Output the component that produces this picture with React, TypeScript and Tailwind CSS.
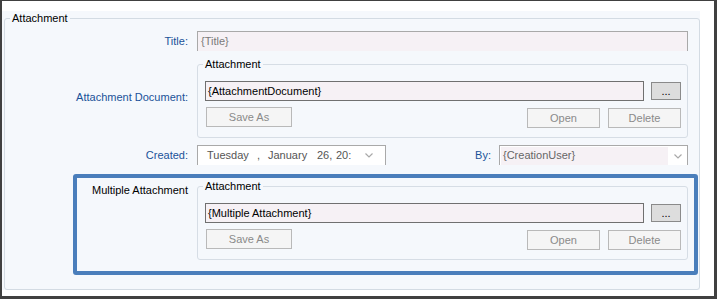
import type { ReactNode } from "react";

function Chevron() {
  return (
    <svg width="8" height="5" viewBox="0 0 8 5" aria-hidden className="shrink-0">
      <polyline points="0.5,0.5 4,4 7.5,0.5" fill="none" stroke="#a9a9a9" strokeWidth="1.2" />
    </svg>
  );
}

function GrayButton({ children, className = "" }: { children: ReactNode; className?: string }) {
  return (
    <button
      type="button"
      className={`h-[20px] border border-[#b9b9b9] bg-[#f5f5f5] text-[11px] leading-[18px] text-[#8a8a8a] ${className}`}
    >
      {children}
    </button>
  );
}

function AttachmentBox({ value }: { value: string }) {
  return (
    <fieldset className="ml-[9px] w-[491px] shrink-0 rounded-[3px] border border-[#d6dde5]">
      <legend className="ml-[5px] px-[2px] leading-[14px] text-black">Attachment</legend>
      <div className="pl-[7px] pr-[6px] pt-[10px] pb-[9px]">
        <div className="flex items-start">
          <div className="h-[20px] w-[439px] border border-[#707070] bg-[#f6f1f5] pl-[2px] leading-[18px] text-black">
            {value}
          </div>
          <button
            type="button"
            className="ml-[7px] mt-[1px] h-[18px] w-[30px] border border-[#8a8a8a] bg-[#dddddd] text-[11px] leading-[14px] text-black"
          >
            ...
          </button>
        </div>
        <div className="mt-[6px] flex items-start">
          <GrayButton className="ml-[1px] w-[86px]">Save As</GrayButton>
          <div className="flex-1" />
          <GrayButton className="mt-[1px] w-[73px]">Open</GrayButton>
          <GrayButton className="ml-[8px] mt-[1px] w-[73px]">Delete</GrayButton>
        </div>
      </div>
    </fieldset>
  );
}

export default function App() {
  return (
    <div className="h-[299px] w-[717px] border-t border-l-2 border-r-[3px] border-b-[3px] border-[#404040] bg-white pt-[10px] font-[family-name:'Liberation_Sans',Arial,sans-serif] text-[11px]">
      <div className="h-[279px] w-[698px] bg-[#f5f8fc] pl-[2px]">
        <fieldset className="h-[279px] w-[696px] rounded-[3px] border border-[#d3dbe3]">
          <legend className="ml-[5px] px-[2px] leading-[14px] text-black">Attachment</legend>

          <div className="pt-[6px]">
            {/* Title */}
            <div className="flex h-[20px] w-[683px] items-center">
              <div className="w-[183px] text-right text-[#1a5299]">Title:</div>
              <div className="ml-[9px] h-[20px] w-[491px] border-x border-t border-[#a9a9a9] bg-[#f6f1f5] pl-[3px] leading-[19px] text-[#7a7a7a]">
                {"{Title}"}
              </div>
            </div>

            {/* Attachment document */}
            <div className="mt-[6px] flex w-[683px] items-center">
              <div className="w-[183px] text-right text-[#1a5299]">Attachment Document:</div>
              <AttachmentBox value="{AttachmentDocument}" />
            </div>

            {/* Created / By */}
            <div className="mt-[7px] flex h-[20px] w-[683px] items-center">
              <div className="w-[183px] text-right text-[#1a5299]">Created:</div>
              <div className="ml-[9px] flex h-[20px] w-[189px] items-center border-x border-t border-[#a9a9a9] bg-white pl-[9px] pr-[12px] text-[#555555]">
                <span className="w-[50px]">Tuesday</span>
                <span className="w-[11px]">,</span>
                <span className="w-[49px]">January</span>
                <span className="w-[19px]">26,</span>
                <span>20:</span>
                <span className="ml-auto">
                  <Chevron />
                </span>
              </div>
              <div className="flex-1" />
              <div className="text-[#1a5299]">By:</div>
              <div className="ml-[8px] flex h-[20px] w-[189px] border-x border-t border-[#a9a9a9] bg-white">
                <div className="mt-[1px] ml-[1px] h-[18px] w-[167px] bg-[#f6f1f5] pl-[2px] leading-[17px] text-[#666666]">
                  {"{CreationUser}"}
                </div>
                <div className="flex flex-1 items-center justify-center pt-[1px]">
                  <Chevron />
                </div>
              </div>
            </div>

            {/* Multiple attachment (highlighted) */}
            <div className="ml-[68px] mt-[9px] w-[625px] rounded-[3px] border-4 border-[#4a7ebb]">
              <div className="flex items-start pt-[1px] pb-[11px]">
                <div className="mt-[4px] w-[111px] text-right leading-[14px] text-black">Multiple Attachment</div>
                <AttachmentBox value="{Multiple Attachment}" />
              </div>
            </div>
          </div>
        </fieldset>
      </div>
    </div>
  );
}
